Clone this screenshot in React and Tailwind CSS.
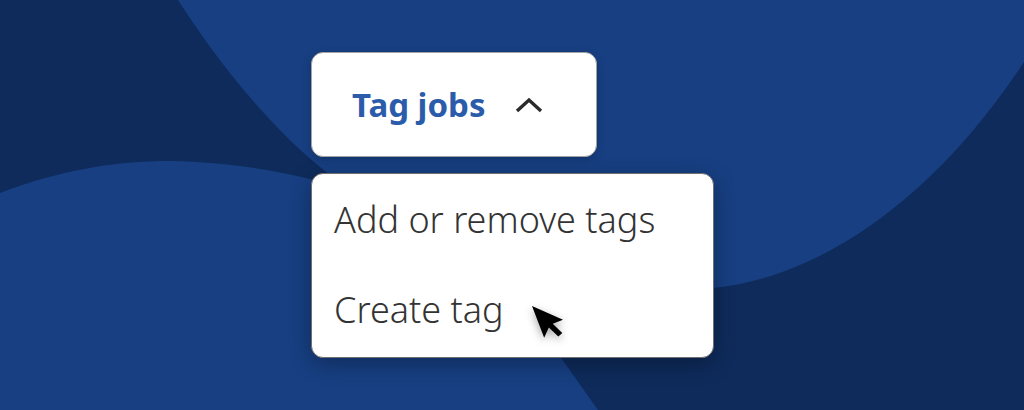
import React from 'react';

const Backdrop = () => (
  <svg
    className="absolute inset-0"
    width="1024"
    height="410"
    viewBox="0 0 1024 410"
    aria-hidden="true"
  >
    {/* big light blob, upper right */}
    <path
      d="M178 0 C210 50 265 125 330 175 L600 300 L713 288 C800 280 920 220 1024 62 L1024 0 Z"
      fill="#173f82"
    />
    {/* light blob, lower left */}
    <path
      d="M0 193 C60 170 115 161 170 161 C230 162 290 172 330 185 L540 330 C560 355 580 385 598 410 L0 410 Z"
      fill="#173f82"
    />
  </svg>
);

const ChevronUp = () => (
  <svg width="30" height="18" viewBox="0 0 30 18" fill="none">
    <polyline
      points="3,15 15,4 27,15"
      stroke="#2b2b2b"
      strokeWidth="3.4"
      strokeLinejoin="miter"
      strokeLinecap="butt"
    />
  </svg>
);

const Pointer = () => (
  <svg
    className="absolute left-[526px] top-[300px] drop-shadow-[0_3px_4px_rgba(0,0,0,0.35)]"
    width="50"
    height="50"
    viewBox="0 0 50 50"
  >
    <polygon
      transform="translate(6 6) rotate(-21) scale(2)"
      points="0,0 0,17 4,13 6.8,19 9.3,18 6.5,12 12,12"
      fill="#000"
    />
  </svg>
);

export default function App() {
  return (
    <div
      className="relative w-full h-[410px] overflow-hidden bg-[#0e2b5b]"
      style={{ fontFamily: '"Noto Sans", "Open Sans", sans-serif' }}
    >
      <Backdrop />

      <div className="relative flex flex-col items-start gap-[16px] pl-[311px] pt-[52px]">
        <button className="flex items-center gap-[28px] w-[286px] h-[105px] pl-[40px] bg-white border border-[#a3a3a3] rounded-[12px] shadow-[0_2px_10px_rgba(0,0,0,0.2)]">
          <span className="text-[33px] leading-none font-bold text-[#2b5caa]">Tag jobs</span>
          <ChevronUp />
        </button>

        <div className="w-[403px] flex flex-col pt-[1px] pb-[2px] bg-white border-[1.5px] border-[#707070] rounded-[12px] shadow-[0_6px_22px_rgba(0,0,0,0.3)]">
          <div className="py-[22px] pl-[22px] text-[36px] leading-[46px] font-[350] text-[#333333]">
            Add or remove tags
          </div>
          <div className="py-[22px] pl-[22px] text-[36px] leading-[46px] font-[350] text-[#333333]">
            Create tag
          </div>
        </div>
      </div>

      <Pointer />
    </div>
  );
}
